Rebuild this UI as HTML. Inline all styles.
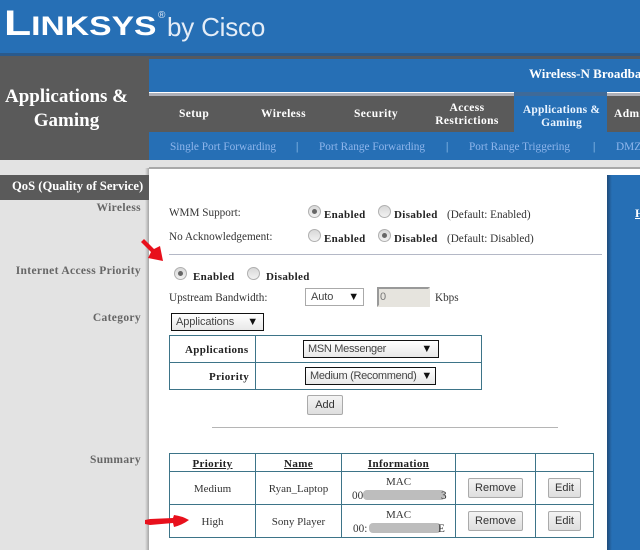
<!DOCTYPE html>
<html><head><meta charset="utf-8">
<style>
html,body{margin:0;padding:0;background:#fff}
#p{position:relative;width:640px;height:550px;overflow:hidden;background:#fff;font-family:"Liberation Serif",serif;font-size:11px;color:#333}
#p div,#p span.a{position:absolute;white-space:nowrap}
.b{background:#266fb5}
.t{color:#fff;font-weight:bold;font-size:11.5px;text-align:center;line-height:13px;letter-spacing:.4px}
.s{color:#8fb6ec;font-size:11.3px;top:141px}
.l{color:#666;font-weight:bold;font-size:11.5px;right:499px;letter-spacing:.35px}
.x{color:#333;font-size:11.2px}
.h{font-weight:bold;color:#222;font-size:11px;letter-spacing:.35px}
.r{width:11px;height:11px;border-radius:50%;background:linear-gradient(#d8d8d8,#f2f2f2);border:1px solid #b0b0b0}
.r.c::after{content:"";position:absolute;left:3px;top:3px;width:5px;height:5px;border-radius:50%;background:#666}
.sel{box-sizing:border-box;border:1px solid #111;background:linear-gradient(#fff,#e8e8e8);font-family:"Liberation Sans",sans-serif;font-size:11px;color:#444;line-height:17px;padding-left:5px;letter-spacing:-.1px}
.sel i{position:absolute;top:0;font-style:normal;font-size:11px;line-height:15px;color:#111}
.btn{box-sizing:border-box;border:1px solid #aaa;border-radius:2px;background:linear-gradient(#f4f4f4,#dedede);font-family:"Liberation Sans",sans-serif;font-size:11px;color:#333;text-align:center;line-height:19px;height:20px}
.ln{background:#3d7488}
.c{text-align:center;font-size:11px;color:#333}
</style></head><body>
<div id="p">
<div class="b" style="left:0;top:0;width:640px;height:53px"></div>
<div style="left:0;top:53px;width:640px;height:3px;background:#2a5a8c"></div>

<div style="left:4px;top:7px;color:#fff;font-family:'Liberation Sans',sans-serif;font-weight:bold;font-size:35px;line-height:34px;transform-origin:left top;transform:scaleX(1.27)">L<span style="font-size:26.5px">INKSYS</span></div>
<div style="left:158px;top:10px;color:#dfe9f5;font-family:'Liberation Sans',sans-serif;font-size:10px">®</div>
<div style="left:167px;top:11px;color:#e4edf7;font-family:'Liberation Sans',sans-serif;font-size:26px;line-height:32px;letter-spacing:-.2px">by Cisco</div>

<div style="left:0;top:56px;width:149px;height:104px;background:#5a5a5a"></div>
<div style="left:0;top:85px;width:133px;text-align:center;color:#fff;font-weight:bold;font-size:19px;line-height:24px;white-space:normal">Applications &amp;<br>Gaming</div>

<div style="left:149px;top:56px;width:491px;height:3px;background:#56595e"></div>
<div class="b" style="left:149px;top:59px;width:491px;height:33px"></div>
<div style="left:529px;top:66px;color:#fff;font-weight:bold;font-size:13px">Wireless-N Broadband Router</div>

<div style="left:149px;top:93px;width:491px;height:39px;background:#5a5a5a"></div>
<div style="left:149px;top:93px;width:365px;height:3px;background:#aeb0b8"></div>
<div style="left:607px;top:93px;width:33px;height:3px;background:#aeb0b8"></div>
<div class="b" style="left:514px;top:96px;width:93px;height:36px"></div>
<div style="left:514px;top:92px;width:93px;height:4px;background:#3f6a98"></div>

<div class="t" style="left:179px;top:108px">Setup</div>
<div class="t" style="left:261px;top:108px">Wireless</div>
<div class="t" style="left:354px;top:108px">Security</div>
<div class="t" style="left:428px;top:102px;width:78px;line-height:13px">Access<br>Restrictions</div>
<div class="t" style="left:515px;top:104px;width:93px;color:#eaf4ff;letter-spacing:.2px">Applications &amp;<br>Gaming</div>
<div class="t" style="left:614px;top:108px">Administration</div>

<div class="b" style="left:149px;top:132px;width:491px;height:28px"></div>
<div class="s" style="left:170px">Single Port Forwarding</div>
<div class="s" style="left:296px;color:#a8d0f5">|</div>
<div class="s" style="left:319px">Port Range Forwarding</div>
<div class="s" style="left:446px;color:#a8d0f5">|</div>
<div class="s" style="left:469px">Port Range Triggering</div>
<div class="s" style="left:593px;color:#a8d0f5">|</div>
<div class="s" style="left:616px">DMZ</div>

<div style="left:0;top:160px;width:149px;height:390px;background:#e3e3e3"></div>
<div style="left:149px;top:160px;width:491px;height:7px;background:#e3e3e3"></div>
<div style="left:149px;top:167px;width:491px;height:2px;background:#a9a9a9"></div>
<div style="left:145px;top:168px;width:4px;height:382px;background:linear-gradient(90deg,#e3e3e3,#a5a5a5)"></div>
<div style="left:0;top:175px;width:149px;height:25px;background:#5a5a5a"></div>
<div style="left:12px;top:179px;color:#fff;font-weight:bold;font-size:12.6px">QoS (Quality of Service)</div>

<div class="b" style="left:607px;top:175px;width:33px;height:375px"></div>
<div style="left:607px;top:175px;width:5px;height:375px;background:linear-gradient(90deg,#1f4a78,#266fb5)"></div>
<div style="left:635px;top:206px;color:#fff;font-weight:bold;font-size:12px;text-decoration:underline">Help</div>

<div class="l" style="top:202px">Wireless</div>
<div class="l" style="top:265px">Internet Access Priority</div>
<div class="l" style="top:312px">Category</div>
<div class="l" style="top:454px">Summary</div>

<div class="x" style="left:169px;top:207px">WMM Support:</div>
<div class="r c" style="left:308px;top:205px"></div>
<div class="h" style="left:324px;top:209px">Enabled</div>
<div class="r" style="left:378px;top:205px"></div>
<div class="h" style="left:394px;top:209px">Disabled</div>
<div class="x" style="left:447px;top:209px">(Default: Enabled)</div>

<div class="x" style="left:169px;top:231px">No Acknowledgement:</div>
<div class="r" style="left:308px;top:229px"></div>
<div class="h" style="left:324px;top:233px">Enabled</div>
<div class="r c" style="left:378px;top:229px"></div>
<div class="h" style="left:394px;top:233px">Disabled</div>
<div class="x" style="left:447px;top:233px">(Default: Disabled)</div>

<div style="left:169px;top:254px;width:433px;height:1px;background:#b4b8c6"></div>

<div class="r c" style="left:174px;top:267px"></div>
<div class="h" style="left:193px;top:271px">Enabled</div>
<div class="r" style="left:247px;top:267px"></div>
<div class="h" style="left:266px;top:271px">Disabled</div>

<div class="x" style="left:169px;top:292px">Upstream Bandwidth:</div>
<div class="sel" style="left:305px;top:288px;width:59px;height:18px;border-color:#aaa;background:#fff">Auto<i style="right:4px;top:1px">▼</i></div>
<div style="box-sizing:border-box;left:377px;top:287px;width:53px;height:20px;background:#e6e4de;border:2px solid;border-color:#999 #e6e4de #e6e4de #999;font-family:'Liberation Sans',sans-serif;font-size:11px;color:#777;line-height:17px;padding-left:1px">0</div>
<div class="x" style="left:435px;top:292px">Kbps</div>

<div class="sel" style="left:171px;top:313px;width:93px;height:18px;padding-left:4px">Applications<i style="top:1px;right:5px">▼</i></div>

<div class="ln" style="left:169px;top:335px;width:313px;height:1px"></div>
<div class="ln" style="left:169px;top:362px;width:313px;height:1px"></div>
<div class="ln" style="left:169px;top:389px;width:313px;height:1px"></div>
<div class="ln" style="left:169px;top:335px;width:1px;height:55px"></div>
<div class="ln" style="left:255px;top:335px;width:1px;height:55px"></div>
<div class="ln" style="left:481px;top:335px;width:1px;height:55px"></div>
<div class="h" style="left:185px;top:344px">Applications</div>
<div class="h" style="left:209px;top:371px">Priority</div>
<div class="sel" style="left:303px;top:340px;width:136px;height:18px;padding-left:4px;letter-spacing:-.3px">MSN Messenger<i style="top:1px;right:6px">▼</i></div>
<div class="sel" style="left:305px;top:367px;width:131px;height:18px;padding-left:4px;letter-spacing:-.3px">Medium (Recommend)<i style="top:1px;right:3px">▼</i></div>

<div class="btn" style="left:307px;top:395px;width:36px">Add</div>
<div style="left:212px;top:427px;width:346px;height:1px;background:#b5b5b5"></div>

<div class="ln" style="left:169px;top:453px;width:425px;height:1px"></div>
<div class="ln" style="left:169px;top:471px;width:425px;height:1px"></div>
<div class="ln" style="left:169px;top:504px;width:425px;height:1px"></div>
<div class="ln" style="left:169px;top:537px;width:425px;height:1px"></div>
<div class="ln" style="left:169px;top:453px;width:1px;height:85px"></div>
<div class="ln" style="left:255px;top:453px;width:1px;height:85px"></div>
<div class="ln" style="left:341px;top:453px;width:1px;height:85px"></div>
<div class="ln" style="left:455px;top:453px;width:1px;height:85px"></div>
<div class="ln" style="left:535px;top:453px;width:1px;height:85px"></div>
<div class="ln" style="left:593px;top:453px;width:1px;height:85px"></div>

<div class="h" style="left:170px;top:458px;width:85px;text-align:center;text-decoration:underline">Priority</div>
<div class="h" style="left:256px;top:458px;width:85px;text-align:center;text-decoration:underline">Name</div>
<div class="h" style="left:342px;top:458px;width:113px;text-align:center;text-decoration:underline">Information</div>

<div class="c" style="left:170px;top:483px;width:85px">Medium</div>
<div class="c" style="left:256px;top:483px;width:85px">Ryan_Laptop</div>
<div class="c" style="left:342px;top:476px;width:113px">MAC</div>
<div class="x" style="left:352px;top:490px">00</div>
<div style="left:363px;top:490px;width:82px;height:10px;background:#bdbdbd;border-radius:4px"></div>
<div class="x" style="left:441px;top:490px">3</div>
<div class="btn" style="left:468px;top:478px;width:55px">Remove</div>
<div class="btn" style="left:548px;top:478px;width:33px">Edit</div>

<div class="c" style="left:170px;top:516px;width:85px">High</div>
<div class="c" style="left:256px;top:516px;width:85px">Sony Player</div>
<div class="c" style="left:342px;top:509px;width:113px">MAC</div>
<div class="x" style="left:353px;top:523px">00:</div>
<div style="left:369px;top:523px;width:72px;height:10px;background:#bdbdbd;border-radius:4px"></div>
<div class="x" style="left:438px;top:523px">E</div>
<div class="btn" style="left:468px;top:511px;width:55px">Remove</div>
<div class="btn" style="left:548px;top:511px;width:33px">Edit</div>

<svg style="position:absolute;left:0;top:0" width="640" height="550">
<path d="M141 242 L144 239 L154 249 L160 246 L163 261 L148 258 L151 252 Z" fill="#e8101c"/>
<path d="M145 520 L150 519 L173 518 L174 515 Q182 516 189 520 Q182 525 174 527 L173 523 L150 525 L145 524 Z" fill="#e8101c"/>
</svg>
</div>
</body></html>
